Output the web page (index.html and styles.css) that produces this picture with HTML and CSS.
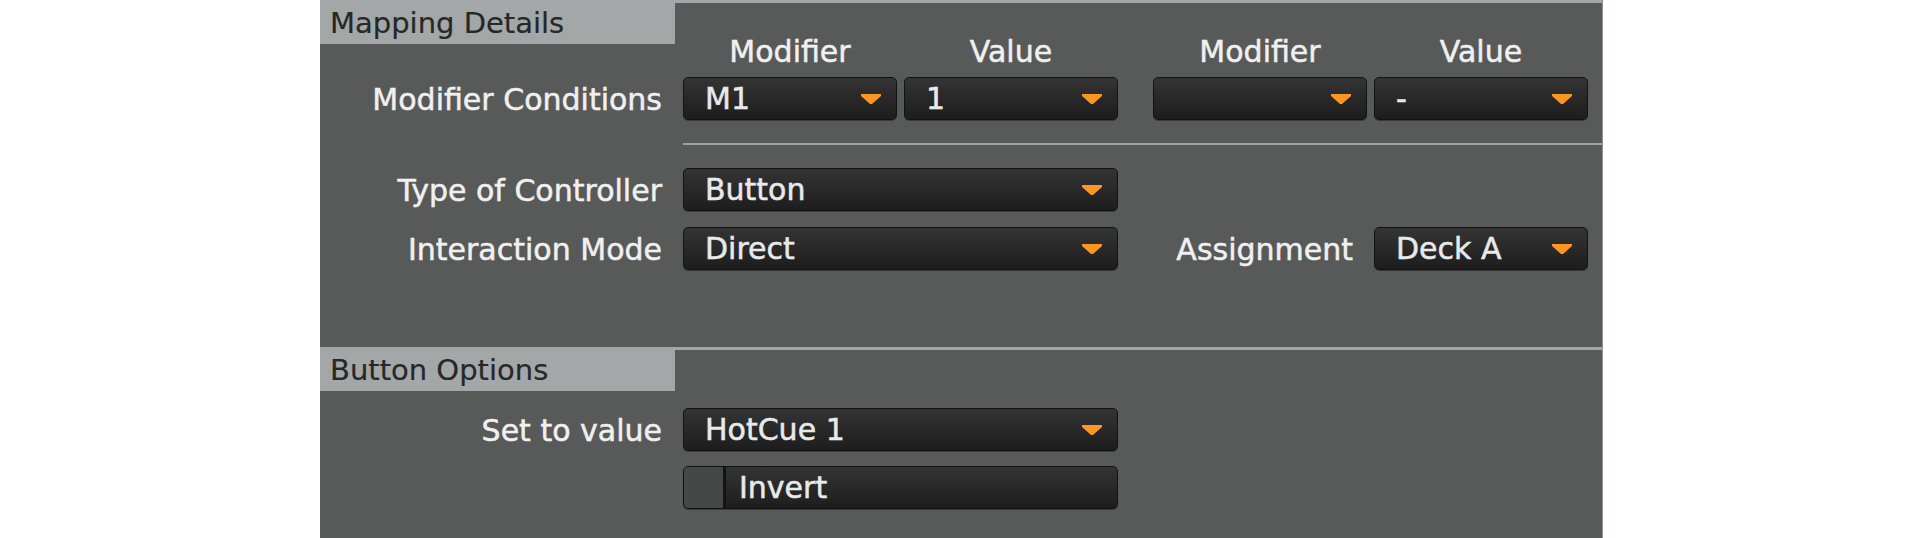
FILE: index.html
```html
<!DOCTYPE html>
<html lang="en">
<head>
    <meta charset="UTF-8">
    <meta name="viewport" content="width=device-width, initial-scale=1.0">
    <title>Mapping Details</title>
    <link rel="stylesheet" href="styles.css">
</head>
<body>
    <div class="panel">
        <!-- Mapping Details -->
        <section class="section">
            <div class="head-row">
                <div class="tab">Mapping Details</div>
                <div class="col-heads">
                    <span class="col-head">Modifier</span>
                    <span class="col-head">Value</span>
                    <span class="col-head group-start">Modifier</span>
                    <span class="col-head">Value</span>
                </div>
            </div>
            <div class="row row-mods">
                <div class="label">Modifier Conditions</div>
                <div class="select half"><span>M1</span><svg class="arrow" viewBox="0 0 20 10"><polygon points="0,0 20,0 20,2 11,10 9,10 0,2"/></svg></div>
                <div class="select half"><span>1</span><svg class="arrow" viewBox="0 0 20 10"><polygon points="0,0 20,0 20,2 11,10 9,10 0,2"/></svg></div>
                <div class="select half group-start"><span></span><svg class="arrow" viewBox="0 0 20 10"><polygon points="0,0 20,0 20,2 11,10 9,10 0,2"/></svg></div>
                <div class="select half"><span>-</span><svg class="arrow" viewBox="0 0 20 10"><polygon points="0,0 20,0 20,2 11,10 9,10 0,2"/></svg></div>
            </div>
            <div class="divider"></div>
            <div class="row row-type">
                <div class="label">Type of Controller</div>
                <div class="select wide"><span>Button</span><svg class="arrow" viewBox="0 0 20 10"><polygon points="0,0 20,0 20,2 11,10 9,10 0,2"/></svg></div>
            </div>
            <div class="row row-mode">
                <div class="label">Interaction Mode</div>
                <div class="select wide"><span>Direct</span><svg class="arrow" viewBox="0 0 20 10"><polygon points="0,0 20,0 20,2 11,10 9,10 0,2"/></svg></div>
                <div class="label label-side">Assignment</div>
                <div class="select half"><span>Deck A</span><svg class="arrow" viewBox="0 0 20 10"><polygon points="0,0 20,0 20,2 11,10 9,10 0,2"/></svg></div>
            </div>
        </section>

        <!-- Button Options -->
        <section class="section section-last">
            <div class="head-row">
                <div class="tab">Button Options</div>
            </div>
            <div class="row row-value">
                <div class="label">Set to value</div>
                <div class="select wide"><span>HotCue 1</span><svg class="arrow" viewBox="0 0 20 10"><polygon points="0,0 20,0 20,2 11,10 9,10 0,2"/></svg></div>
            </div>
            <div class="row row-invert">
                <div class="label"></div>
                <div class="toggle wide">
                    <span class="checkbox"></span>
                    <span class="toggle-text">Invert</span>
                </div>
            </div>
        </section>
    </div>
</body>
</html>
```

FILE: styles.css
```css
body {
    margin: 0;
    background-color: #ffffff;
    font-family: "DejaVu Sans", Verdana, sans-serif;
    font-size: 30px;
    -webkit-text-stroke: 0.5px currentColor;
}
.panel {
    margin-left: 320px;
    width: 1282px;
    height: 538px;
    background-color: #585a59;
    border-right: 1px solid #8c8f8e;
    display: flex;
    flex-direction: column;
}
.section {
    border-top: 3px solid #a3a7a7;
    padding-bottom: 77px;
}
.section-last {
    flex: 1;
    padding-bottom: 0;
}
.head-row {
    display: flex;
    align-items: flex-start;
}
.tab {
    width: 345px;
    height: 41px;
    line-height: 41px;
    padding-left: 10px;
    background-color: #a3a7a7;
    color: #262727;
    font-size: 29px;
    -webkit-text-stroke: 0.2px currentColor;
}
.col-heads {
    display: flex;
    margin-left: 8px;
    padding-top: 32px;
    gap: 7px;
    color: #f0f0f0;
    line-height: 34px;
}
.col-head {
    width: 214px;
    text-align: center;
}
.group-start {
    margin-left: 28px;
}
.row {
    display: flex;
    align-items: center;
    gap: 7px;
    height: 43px;
}
.row-mods {
    margin-top: 8px;
}
.row-type {
    margin-top: 23px;
}
.row-mode {
    margin-top: 16px;
}
.row-value {
    margin-top: 17px;
}
.row-invert {
    margin-top: 15px;
}
.label {
    box-sizing: border-box;
    width: 356px;
    padding-right: 14px;
    text-align: right;
    color: #f0f0f0;
    padding-top: 2px;
}
.label-side {
    width: 242px;
}
.divider {
    margin-top: 23px;
    margin-left: 363px;
    height: 2px;
    background-color: #a0a3a2;
}
.select, .toggle {
    box-sizing: border-box;
    height: 43px;
    display: flex;
    align-items: center;
    border: 1px solid #121212;
    border-radius: 5px;
    background: linear-gradient(#343434, #1d1d1d);
    box-shadow: 0 1px 0 rgba(0,0,0,0.35);
    color: #e8eaea;
}
.select {
    justify-content: space-between;
    padding: 0 15px 0 21px;
}
.half {
    width: 214px;
}
.wide {
    width: 435px;
}
.arrow {
    width: 20px;
    height: 10px;
    fill: #fb9622;
    flex-shrink: 0;
}
.toggle {
    overflow: hidden;
}
.checkbox {
    width: 39px;
    height: 100%;
    background-color: #464747;
    border-right: 3px solid #141414;
    border-radius: 4px 0 0 4px;
}
.toggle-text {
    margin-left: 13px;
}
```
